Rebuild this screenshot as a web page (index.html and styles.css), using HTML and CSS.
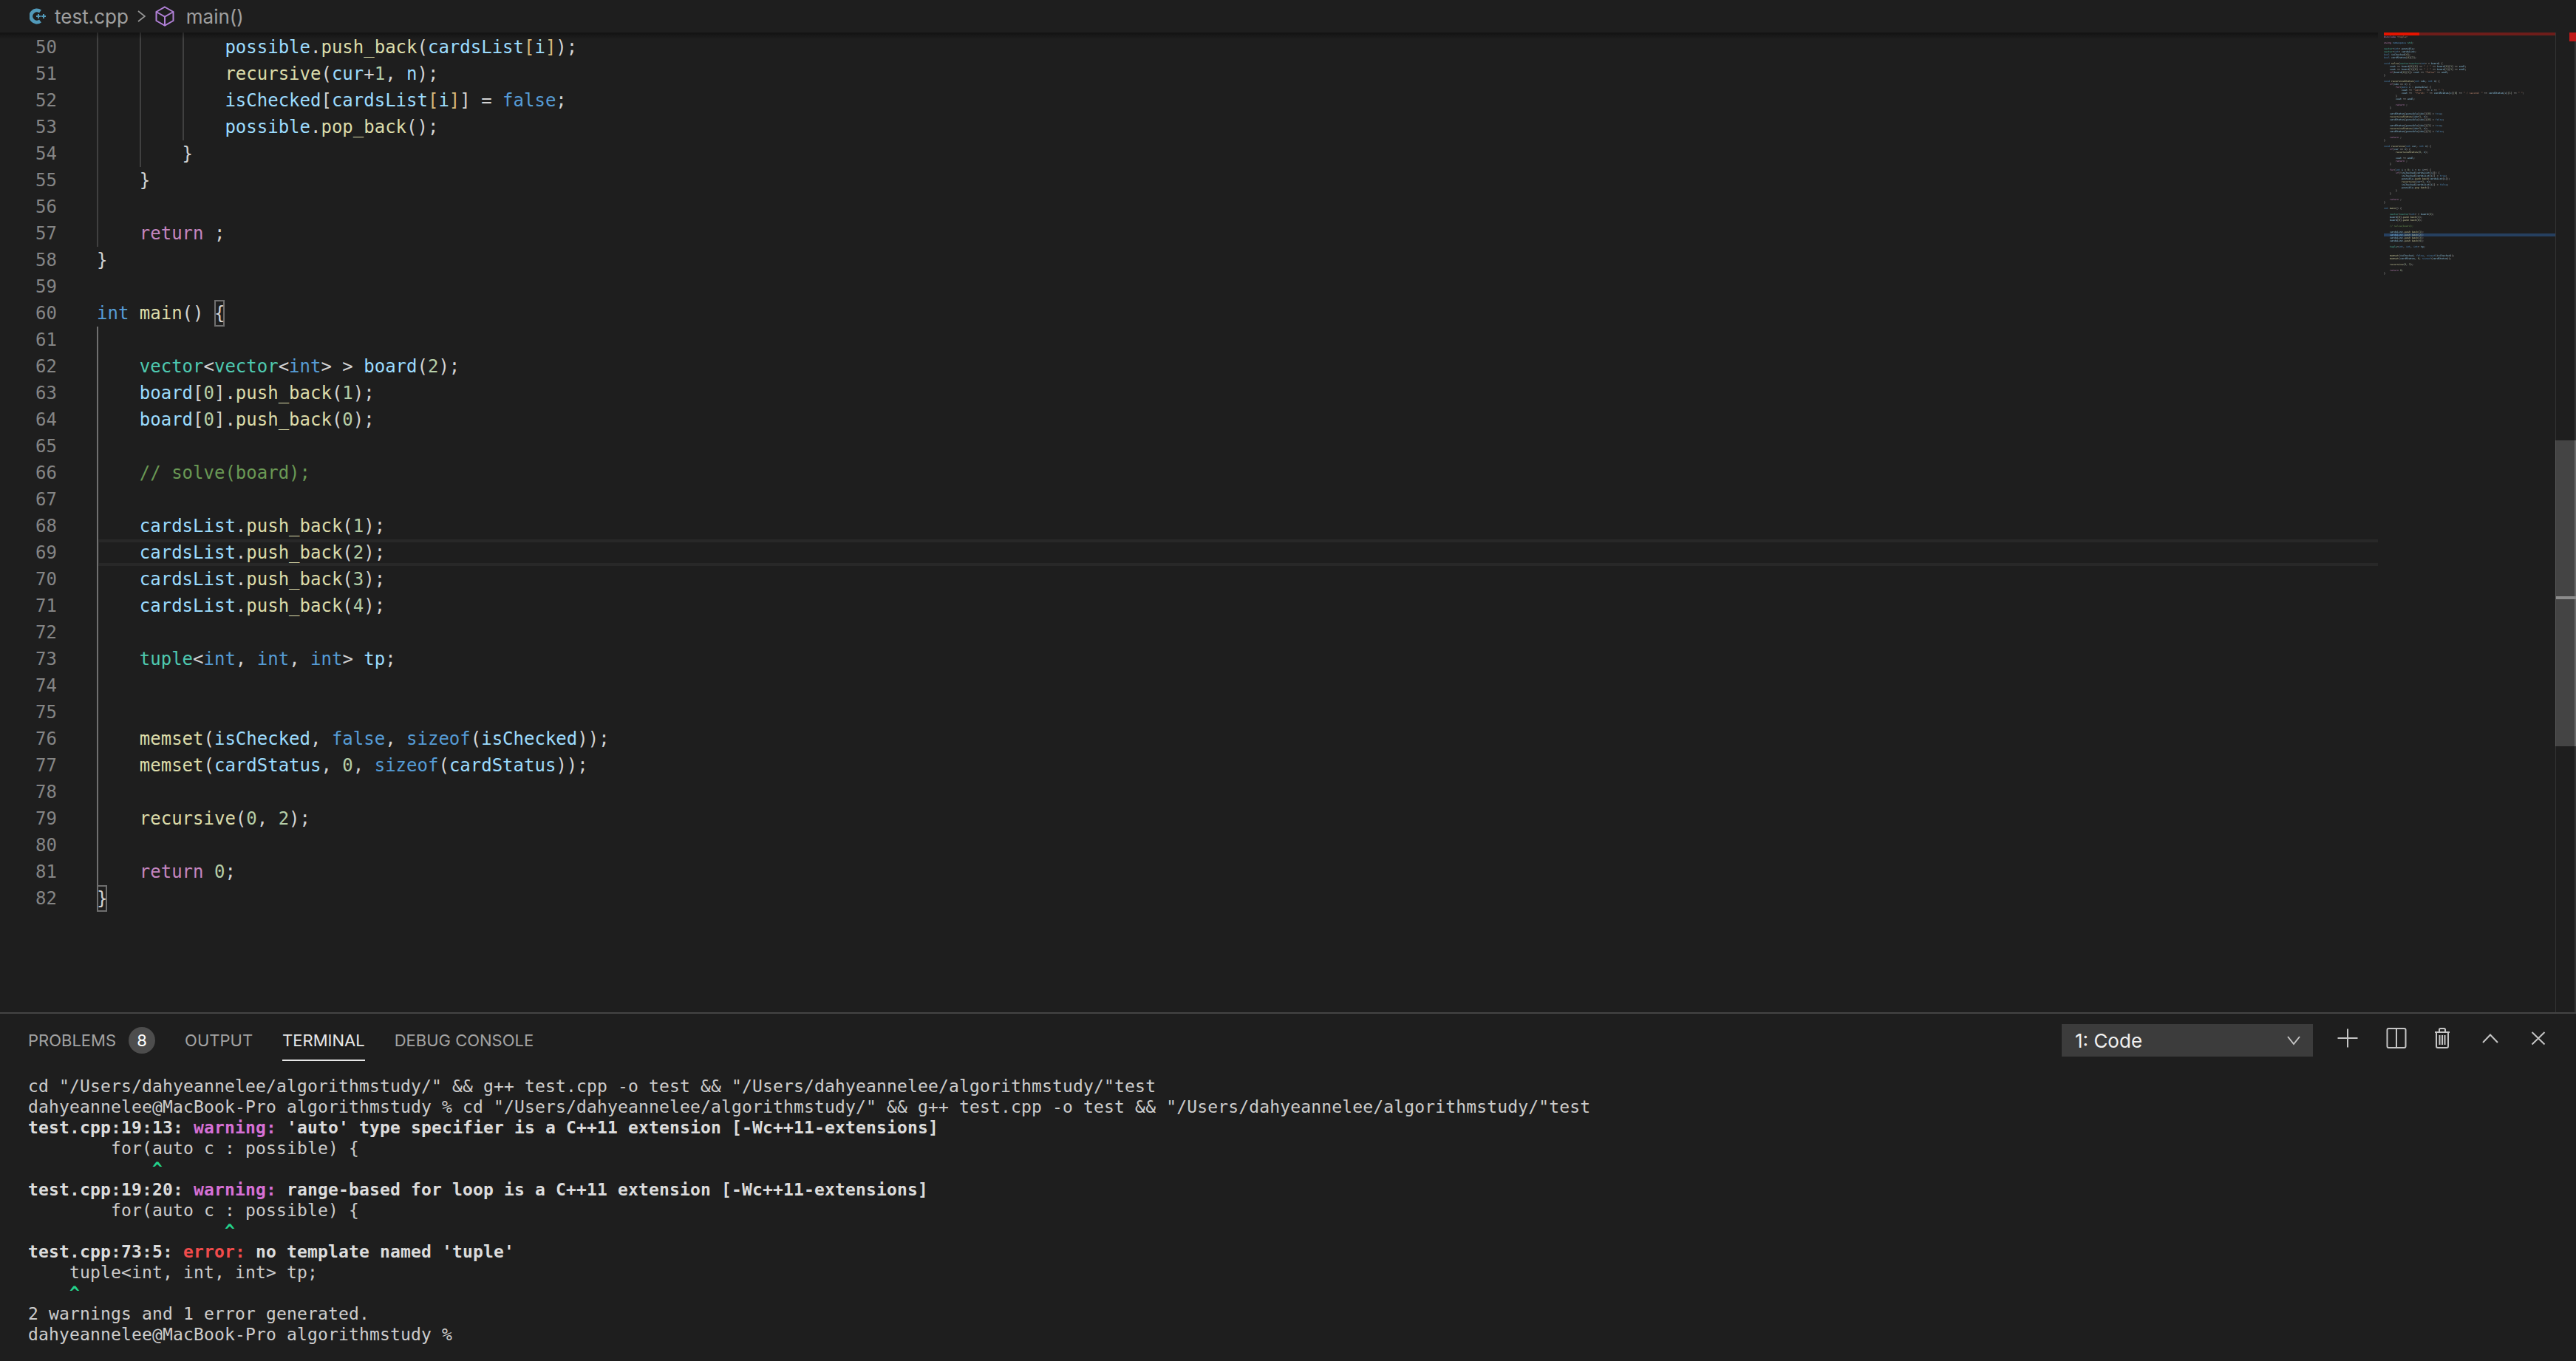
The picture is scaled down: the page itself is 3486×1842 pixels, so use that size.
FILE: index.html
```html
<!DOCTYPE html>
<html lang="en">
<head>
<meta charset="utf-8">
<title>test.cpp</title>
<link rel="stylesheet" href="styles.css">
</head>
<body>
<div class="app">
  <header class="crumbs">
    <svg class="cpp-icon" width="22" height="24" viewBox="0 0 22 24"><path class="cpp-c" d="M14.500 5.500A8 8 0 1 0 14.500 18.500"/><path class="cpp-p" d="M9 12h6M12 9v6M16 12h6M19 9v6"/></svg>
    <span class="crumb">test.cpp</span>
    <svg class="crumb-sep" width="11" height="16" viewBox="0 0 11 16"><path d="M1 1l9 7-9 7"/></svg>
    <svg class="box-icon" width="26" height="28" viewBox="0 0 26 28"><path d="M13 1.500L24.500 8v12L13 26.500 1.500 20V8zM1.500 8L13 14.500 24.500 8M13 14.500v12"/></svg>
    <span class="crumb">main()</span>
  </header>

  <main class="editor">
    <div class="lines">
      <i class="shadow"></i>
      <i class="guide g-a"></i>
      <i class="guide g-b"></i>
      <i class="guide g-c"></i>
      <i class="guide g-main"></i>
      <div class="row"><span class="ln">50</span><span class="txt">            <b class="v">possible</b>.<b class="f">push_back</b>(<b class="v">cardsList</b><b class="br">[</b><b class="v">i</b><b class="br">]</b>);</span></div>
      <div class="row"><span class="ln">51</span><span class="txt">            <b class="f">recursive</b>(<b class="v">cur</b>+<b class="n">1</b>, <b class="v">n</b>);</span></div>
      <div class="row"><span class="ln">52</span><span class="txt">            <b class="v">isChecked</b>[<b class="v">cardsList</b><b class="br">[</b><b class="v">i</b><b class="br">]</b>] = <b class="k">false</b>;</span></div>
      <div class="row"><span class="ln">53</span><span class="txt">            <b class="v">possible</b>.<b class="f">pop_back</b>();</span></div>
      <div class="row"><span class="ln">54</span><span class="txt">        }</span></div>
      <div class="row"><span class="ln">55</span><span class="txt">    }</span></div>
      <div class="row"><span class="ln">56</span><span class="txt"></span></div>
      <div class="row"><span class="ln">57</span><span class="txt">    <b class="c">return</b> ;</span></div>
      <div class="row"><span class="ln">58</span><span class="txt">}</span></div>
      <div class="row"><span class="ln">59</span><span class="txt"></span></div>
      <div class="row"><span class="ln">60</span><span class="txt"><b class="k">int</b> <b class="f">main</b>() <b class="match">{</b></span></div>
      <div class="row"><span class="ln">61</span><span class="txt"></span></div>
      <div class="row"><span class="ln">62</span><span class="txt">    <b class="t">vector</b>&lt;<b class="t">vector</b>&lt;<b class="k">int</b>&gt; &gt; <b class="v">board</b>(<b class="n">2</b>);</span></div>
      <div class="row"><span class="ln">63</span><span class="txt">    <b class="v">board</b>[<b class="n">0</b>].<b class="f">push_back</b>(<b class="n">1</b>);</span></div>
      <div class="row"><span class="ln">64</span><span class="txt">    <b class="v">board</b>[<b class="n">0</b>].<b class="f">push_back</b>(<b class="n">0</b>);</span></div>
      <div class="row"><span class="ln">65</span><span class="txt"></span></div>
      <div class="row"><span class="ln">66</span><span class="txt">    <b class="m">// solve(board);</b></span></div>
      <div class="row"><span class="ln">67</span><span class="txt"></span></div>
      <div class="row"><span class="ln">68</span><span class="txt">    <b class="v">cardsList</b>.<b class="f">push_back</b>(<b class="n">1</b>);</span></div>
      <div class="row current"><span class="ln">69</span><span class="txt">    <b class="v">cardsList</b>.<b class="f">push_back</b>(<b class="n">2</b>);</span></div>
      <div class="row"><span class="ln">70</span><span class="txt">    <b class="v">cardsList</b>.<b class="f">push_back</b>(<b class="n">3</b>);</span></div>
      <div class="row"><span class="ln">71</span><span class="txt">    <b class="v">cardsList</b>.<b class="f">push_back</b>(<b class="n">4</b>);</span></div>
      <div class="row"><span class="ln">72</span><span class="txt"></span></div>
      <div class="row"><span class="ln">73</span><span class="txt">    <b class="t">tuple</b>&lt;<b class="k">int</b>, <b class="k">int</b>, <b class="k">int</b>&gt; <b class="v">tp</b>;</span></div>
      <div class="row"><span class="ln">74</span><span class="txt"></span></div>
      <div class="row"><span class="ln">75</span><span class="txt"></span></div>
      <div class="row"><span class="ln">76</span><span class="txt">    <b class="f">memset</b>(<b class="v">isChecked</b>, <b class="k">false</b>, <b class="k">sizeof</b>(<b class="v">isChecked</b>));</span></div>
      <div class="row"><span class="ln">77</span><span class="txt">    <b class="f">memset</b>(<b class="v">cardStatus</b>, <b class="n">0</b>, <b class="k">sizeof</b>(<b class="v">cardStatus</b>));</span></div>
      <div class="row"><span class="ln">78</span><span class="txt"></span></div>
      <div class="row"><span class="ln">79</span><span class="txt">    <b class="f">recursive</b>(<b class="n">0</b>, <b class="n">2</b>);</span></div>
      <div class="row"><span class="ln">80</span><span class="txt"></span></div>
      <div class="row"><span class="ln">81</span><span class="txt">    <b class="c">return</b> <b class="n">0</b>;</span></div>
      <div class="row"><span class="ln">82</span><span class="txt"><b class="match">}</b></span></div>
    </div>

    <aside class="minimap">
      <i class="mini-err"></i>
      <i class="mini-sel"></i>
<pre class="mini-code"><b class="c">#include</b> <b class="s">&lt;iostream&gt;</b>
<b class="c">#include</b> <b class="s">&lt;tuple&gt;</b>

<b class="c">using</b> <b class="k">namespace</b> <b class="t">std</b>;

<b class="t">vector</b>&lt;<b class="k">int</b>&gt; <b class="v">possible</b>;
<b class="t">vector</b>&lt;<b class="k">int</b>&gt; <b class="v">cardsList</b>;
<b class="k">bool</b> <b class="v">isChecked</b>[<b class="n">4</b>];
<b class="k">bool</b> <b class="v">cardStatus</b>[<b class="n">4</b>][<b class="n">2</b>];

<b class="k">void</b> <b class="f">solve</b>(<b class="t">vector</b>&lt;<b class="t">vector</b>&lt;<b class="k">int</b>&gt; &gt; <b class="v">board</b>) {
    <b class="v">cout</b> &lt;&lt; <b class="v">board</b>[<b class="n">0</b>][<b class="n">0</b>] &lt;&lt; <b class="s">" / "</b> &lt;&lt; <b class="v">board</b>[<b class="n">0</b>][<b class="n">1</b>] &lt;&lt; <b class="v">endl</b>;
    <b class="v">cout</b> &lt;&lt; <b class="v">board</b>[<b class="n">1</b>][<b class="n">0</b>] &lt;&lt; <b class="s">" / "</b> &lt;&lt; <b class="v">board</b>[<b class="n">1</b>][<b class="n">1</b>] &lt;&lt; <b class="v">endl</b>;
    <b class="c">if</b>(<b class="v">board</b>[<b class="n">0</b>][<b class="n">1</b>]) <b class="v">cout</b> &lt;&lt; <b class="s">"False"</b> &lt;&lt; <b class="v">endl</b>;
}

<b class="k">void</b> <b class="f">recursiveStatus</b>(<b class="k">int</b> <b class="v">idx</b>, <b class="k">int</b> <b class="v">n</b>) {
    <b class="c">if</b>(<b class="v">idx</b> == <b class="v">n</b>) {
        <b class="c">for</b>(<b class="k">auto</b> <b class="v">c</b> : <b class="v">possible</b>) {
            <b class="v">cout</b> &lt;&lt; <b class="s">"card: "</b> &lt;&lt; <b class="v">c</b> &lt;&lt; <b class="s">" "</b>;
            <b class="v">cout</b> &lt;&lt;  <b class="s">"first: "</b> &lt;&lt; <b class="v">cardStatus</b>[<b class="v">c</b>][<b class="n">0</b>] &lt;&lt; <b class="s">" / second: "</b> &lt;&lt; <b class="v">cardStatus</b>[<b class="v">c</b>][<b class="n">1</b>] &lt;&lt; <b class="s">" "</b>;
        }
        <b class="v">cout</b> &lt;&lt; <b class="v">endl</b>;

        <b class="c">return</b> ;
    }

    <b class="v">cardStatus</b>[<b class="v">possible</b>[<b class="v">idx</b>]][<b class="n">0</b>] = <b class="k">true</b>;
    <b class="f">recursiveStatus</b>(<b class="v">idx</b>+<b class="n">1</b>, <b class="v">n</b>);
    <b class="v">cardStatus</b>[<b class="v">possible</b>[<b class="v">idx</b>]][<b class="n">0</b>] = <b class="k">false</b>;

    <b class="v">cardStatus</b>[<b class="v">possible</b>[<b class="v">idx</b>]][<b class="n">1</b>] = <b class="k">true</b>;
    <b class="f">recursiveStatus</b>(<b class="v">idx</b>+<b class="n">1</b>, <b class="v">n</b>);
    <b class="v">cardStatus</b>[<b class="v">possible</b>[<b class="v">idx</b>]][<b class="n">1</b>] = <b class="k">false</b>;

    <b class="c">return</b> ;
}

<b class="k">void</b> <b class="f">recursive</b>(<b class="k">int</b> <b class="v">cur</b>, <b class="k">int</b> <b class="v">n</b>) {
    <b class="c">if</b>(<b class="v">cur</b> == <b class="v">n</b>) {
        <b class="f">recursiveStatus</b>(<b class="n">0</b>, <b class="v">n</b>);

        <b class="v">cout</b> &lt;&lt; <b class="v">endl</b>;
        <b class="c">return</b> ;
    }

    <b class="c">for</b>(<b class="k">int</b> <b class="v">i</b> = <b class="n">0</b>; <b class="v">i</b> &lt; <b class="v">n</b>; <b class="v">i</b>++) {
        <b class="c">if</b>(!<b class="v">isChecked</b>[<b class="v">cardsList</b>[<b class="v">i</b>]]) {
            <b class="v">isChecked</b>[<b class="v">cardsList</b>[<b class="v">i</b>]] = <b class="k">true</b>;
            <b class="v">possible</b>.<b class="f">push_back</b>(<b class="v">cardsList</b>[<b class="v">i</b>]);
            <b class="f">recursive</b>(<b class="v">cur</b>+<b class="n">1</b>, <b class="v">n</b>);
            <b class="v">isChecked</b>[<b class="v">cardsList</b>[<b class="v">i</b>]] = <b class="k">false</b>;
            <b class="v">possible</b>.<b class="f">pop_back</b>();
        }
    }

    <b class="c">return</b> ;
}

<b class="k">int</b> <b class="f">main</b>() {

    <b class="t">vector</b>&lt;<b class="t">vector</b>&lt;<b class="k">int</b>&gt; &gt; <b class="v">board</b>(<b class="n">2</b>);
    <b class="v">board</b>[<b class="n">0</b>].<b class="f">push_back</b>(<b class="n">1</b>);
    <b class="v">board</b>[<b class="n">0</b>].<b class="f">push_back</b>(<b class="n">0</b>);

    <b class="m">// solve(board);</b>

    <b class="v">cardsList</b>.<b class="f">push_back</b>(<b class="n">1</b>);
    <b class="v">cardsList</b>.<b class="f">push_back</b>(<b class="n">2</b>);
    <b class="v">cardsList</b>.<b class="f">push_back</b>(<b class="n">3</b>);
    <b class="v">cardsList</b>.<b class="f">push_back</b>(<b class="n">4</b>);

    <b class="t">tuple</b>&lt;<b class="k">int</b>, <b class="k">int</b>, <b class="k">int</b>&gt; <b class="v">tp</b>;


    <b class="f">memset</b>(<b class="v">isChecked</b>, <b class="k">false</b>, <b class="k">sizeof</b>(<b class="v">isChecked</b>));
    <b class="f">memset</b>(<b class="v">cardStatus</b>, <b class="n">0</b>, <b class="k">sizeof</b>(<b class="v">cardStatus</b>));

    <b class="f">recursive</b>(<b class="n">0</b>, <b class="n">2</b>);

    <b class="c">return</b> <b class="n">0</b>;
}</pre>
    </aside>

    <div class="ruler">
      <i class="ruler-edge"></i>
      <i class="slider"></i>
      <i class="ruler-err"></i>
      <i class="ruler-cursor"></i>
    </div>
  </main>

  <section class="panel">
    <nav class="tabs">
      <span class="tab">PROBLEMS</span>
      <span class="badge">8</span>
      <span class="tab">OUTPUT</span>
      <span class="tab active">TERMINAL</span>
      <span class="tab">DEBUG CONSOLE</span>
      <div class="actions">
        <div class="select"><span>1: Code</span>
          <svg width="20" height="14" viewBox="0 0 20 14"><path d="M2 2l8 10 8-10"/></svg>
        </div>
        <svg class="act act-plus" width="44" height="44" viewBox="0 0 44 44"><path d="M22 9.500v25M8.500 22h27"/></svg>
        <svg class="act act-split" width="44" height="44" viewBox="0 0 44 44"><path d="M11.500 9h21a2 2 0 0 1 2 2v22a2 2 0 0 1-2 2h-21a2 2 0 0 1-2-2V11a2 2 0 0 1 2-2zM22 9v26"/></svg>
        <svg class="act act-trash" width="44" height="44" viewBox="0 0 44 44"><path d="M12 14h20M18 14v-3.500a1.500 1.500 0 0 1 1.500-1.500h5a1.500 1.500 0 0 1 1.500 1.500V14M14 14v19a2 2 0 0 0 2 2h12a2 2 0 0 0 2-2V14M18.500 18v13M22 18v13M25.500 18v13"/></svg>
        <svg class="act act-up" width="44" height="44" viewBox="0 0 44 44"><path d="M12 28l10-10.500L32 28"/></svg>
        <svg class="act act-x" width="44" height="44" viewBox="0 0 44 44"><path d="M13.500 14l17 16.500M30.500 14l-17 16.500"/></svg>
      </div>
    </nav>
<pre class="term">cd "/Users/dahyeannelee/algorithmstudy/" &amp;&amp; g++ test.cpp -o test &amp;&amp; "/Users/dahyeannelee/algorithmstudy/"test
dahyeannelee@MacBook-Pro algorithmstudy % cd "/Users/dahyeannelee/algorithmstudy/" &amp;&amp; g++ test.cpp -o test &amp;&amp; "/Users/dahyeannelee/algorithmstudy/"test
<b>test.cpp:19:13: <em class="warn">warning:</em> 'auto' type specifier is a C++11 extension [-Wc++11-extensions]</b>
        for(auto c : possible) {
<b class="caret">            ^</b>
<b>test.cpp:19:20: <em class="warn">warning:</em> range-based for loop is a C++11 extension [-Wc++11-extensions]</b>
        for(auto c : possible) {
<b class="caret">                   ^</b>
<b>test.cpp:73:5: <em class="err">error:</em> no template named 'tuple'</b>
    tuple&lt;int, int, int&gt; tp;
<b class="caret">    ^</b>
2 warnings and 1 error generated.
dahyeannelee@MacBook-Pro algorithmstudy % </pre>
  </section>
</div>
</body>
</html>
```
FILE: styles.css
```css
* { box-sizing: border-box; }
html, body { margin: 0; height: 100%; background: #1e1e1e; overflow: hidden; }
b, i, em { font-weight: inherit; font-style: normal; }
i { display: block; }

.app { display: flex; flex-direction: column; width: 3486px; height: 1842px; }

/* breadcrumbs */
.crumbs { flex: 0 0 44px; display: flex; align-items: center; padding-left: 40px; font: 26px "Inter", "Noto Sans", sans-serif; color: #a0a0a0; }
.cpp-icon { margin-right: 12px; }
.cpp-c { fill: none; stroke: #519aba; stroke-width: 5; }
.cpp-p { fill: none; stroke: #519aba; stroke-width: 2; }
.crumb-sep { margin: 0 13px 0 12px; }
.crumb-sep path { fill: none; stroke: #999; stroke-width: 1.6; }
.box-icon { margin-right: 16px; }
.box-icon path { fill: none; stroke: #b180d7; stroke-width: 2; }

/* editor */
.editor { flex: 0 0 1326px; display: flex; overflow: hidden; position: relative; }
.lines { flex: 0 0 3218px; position: relative; padding-top: 2px; font: 24px/36px "DejaVu Sans Mono", monospace; color: #d4d4d4; }
.row { display: flex; height: 36px; white-space: pre; }
.ln { flex: 0 0 77px; text-align: right; color: #858585; margin-right: 54px; }
.txt { flex: 1; height: 36px; }
.current .txt { box-shadow: inset 3px 0 0 #282828, inset 0 4px 0 #282828, inset 0 -4px 0 #282828; }
.shadow { position: absolute; left: 0; right: 0; top: 0; height: 9px; background: linear-gradient(#000000, rgba(0,0,0,0)); opacity: .4; z-index: 3; }
.guide { position: absolute; width: 2px; background: #404040; z-index: 1; }
.g-a { left: 131px; top: 0; height: 290px; }
.g-b { left: 189px; top: 0; height: 182px; }
.g-c { left: 247px; top: 0; height: 146px; }
.g-main { left: 131px; top: 398px; height: 756px; background: #707070; }
.match { display: inline-block; height: 36px; vertical-align: top; box-shadow: inset 0 0 0 2px #6f6f6f; }

.v { color: #9cdcfe; }
.f { color: #dcdcaa; }
.k { color: #569cd6; }
.c { color: #c586c0; }
.t { color: #4ec9b0; }
.n { color: #b5cea8; }
.m { color: #6a9955; }
.s { color: #ce9178; }
.br { color: #d7ba7d; }

/* minimap */
.minimap { flex: 0 0 232px; margin-left: 8px; position: relative; overflow: hidden; }
.mini-code { position: relative; margin: 0; font: 3.32px/4px "DejaVu Sans Mono", monospace; color: #d4d4d4; opacity: .9; filter: blur(.3px); }
.mini-err { position: absolute; left: 0; right: 0; top: 0; height: 4px; background: linear-gradient(90deg, #e51400 48px, #6e1d1a 48px); z-index: 2; }
.mini-sel { position: absolute; left: 0; right: 0; top: 272px; height: 4px; background: #264060; }

/* overview ruler */
.ruler { flex: 0 0 28px; position: relative; border-left: 1px solid #333; }
.ruler-edge { position: absolute; right: 0; top: 0; bottom: 0; width: 2px; background: #333; }
.slider { position: absolute; left: -1px; right: 0; top: 552px; height: 414px; background: #444; border-left: 1px solid #5a5a5a; border-right: 2px solid #6a6a6a; }
.ruler-err { position: absolute; right: 0; top: 0; width: 9px; height: 12px; background: #c01818; }
.ruler-cursor { position: absolute; left: 0; right: 0; top: 763px; height: 4px; background: #8c8c8c; }

/* panel */
.panel { flex: 1; border-top: 2px solid #444; min-height: 0; }
.tabs { display: flex; align-items: flex-start; height: 64px; padding-left: 38px; font: 22px/28px "Inter", "Noto Sans", sans-serif; color: #a3a3a3; }
.tab { padding: 22px 0 12px; margin-right: 40px; height: 64px; }
.tab.active { color: #e7e7e7; border-bottom: 2px solid #e7e7e7; }
.badge { width: 36px; height: 36px; margin: 18px 40px 0 -23px; border-radius: 50%; background: #4d4d4d; color: #fff; text-align: center; line-height: 36px; font-size: 22px; }
.actions { margin-left: auto; display: flex; align-items: flex-start; padding-right: 29px; }
.select { width: 340px; height: 44px; margin-top: 14px; background: #3c3c3c; display: flex; align-items: center; justify-content: space-between; padding: 0 16px 0 18px; font: 26px "Inter", "Noto Sans", sans-serif; color: #f0f0f0; }
.select path { fill: none; stroke: #c5c5c5; stroke-width: 2; }
.act { margin-top: 11px; }
.act path { fill: none; stroke: #c5c5c5; stroke-width: 2; }
.act-plus { margin-left: 25px; }
.act-split { margin-left: 22px; }
.act-trash { margin-left: 18px; }
.act-up { margin-left: 21px; }
.act-x { margin-left: 21px; }

/* terminal */
.term { margin: 20px 0 0; padding-left: 38px; font: 23px/28px "DejaVu Sans Mono", monospace; letter-spacing: .154px; color: #cccccc; }
.term b { font-weight: 700; color: #dcdcdc; }
.term .warn { color: #d670d6; }
.term .err { color: #f14c4c; }
.term .caret { color: #23d18b; }
```
